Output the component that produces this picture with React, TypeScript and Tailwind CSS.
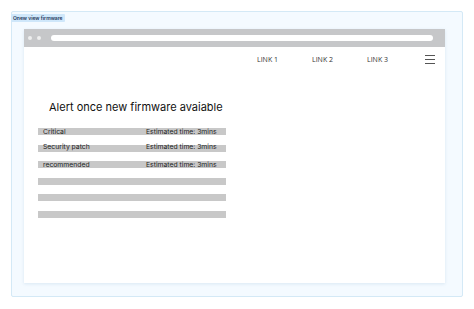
import React from 'react';

const rows = [
  { label: 'Critical', time: 'Estimated time: 3mins', lift: false },
  { label: 'Security patch', time: 'Estimated time: 3mins', lift: true },
  { label: 'recommended', time: 'Estimated time: 3mins', lift: false },
  { label: '', time: '', lift: false },
  { label: '', time: '', lift: false },
  { label: '', time: '', lift: false },
];

export default function App() {
  return (
    <div className="w-[474px] h-[309px] bg-white overflow-hidden font-['Inter',sans-serif]">
      {/* Frame label */}
      <div className="pt-[2px] pl-[11px] h-[11px]">
        <span className="inline-block h-[8px] px-[2px] bg-[#cfe7fa] rounded-[1px] text-[5px] leading-[8px] font-semibold text-[#1d3557]">
          Onew view firmware
        </span>
      </div>

      {/* Frame */}
      <div className="ml-[11px] w-[452px] h-[286px] bg-[#f4faff] border border-[#d4e9f6] rounded-[2px] pt-[17px] pl-[12px]">
        <div className="w-[421px] h-[254px] flex flex-col shadow-[0_1px_3px_rgba(200,220,235,0.6)]">
          {/* Browser bar */}
          <div className="h-[18px] bg-[#c6c7c9] flex items-center pl-[4px] pr-[12px]">
            <div className="w-[4px] h-[4px] rounded-full bg-[#eeeeee]" />
            <div className="w-[4px] h-[4px] rounded-full bg-[#eeeeee] ml-[5px]" />
            <div className="flex-1 h-[6px] rounded-full bg-white ml-[10px]" />
          </div>

          {/* Page */}
          <div className="flex-1 bg-white">
            <div className="flex items-center h-[26px]">
              <div className="flex-1" />
              <div className="flex items-center text-[7px] text-[#333] font-['Open_Sans',sans-serif]">
                <span className="w-[55px]">LINK 1</span>
                <span className="w-[55px]">LINK 2</span>
                <span className="w-[58px]">LINK 3</span>
              </div>
              <div className="w-[10px] mr-[10px] flex flex-col gap-[3px] -mt-[2px]">
                <div className="h-px bg-[#555]" />
                <div className="h-px bg-[#555]" />
                <div className="h-px bg-[#555]" />
              </div>
            </div>

            <h1 className="mt-[27px] ml-[25px] text-[11px] leading-[14px] text-[#111]">
              Alert once new firmware avaiable
            </h1>

            <div className="mt-[14px] ml-[14px] w-[188px] flex flex-col gap-[9.6px]">
              {rows.map((r, i) => (
                <div key={i} className="relative h-[7px] bg-[#c8c8c8]">
                  {r.label && (
                    <div
                      className={`absolute left-0 right-0 flex text-[6.8px] leading-[7px] text-[#222] ${
                        r.lift ? '-top-[2px]' : 'top-0'
                      }`}
                    >
                      <span className="w-[108px] pl-[5px]">{r.label}</span>
                      <span>{r.time}</span>
                    </div>
                  )}
                </div>
              ))}
            </div>
          </div>
        </div>
      </div>
    </div>
  );
}
